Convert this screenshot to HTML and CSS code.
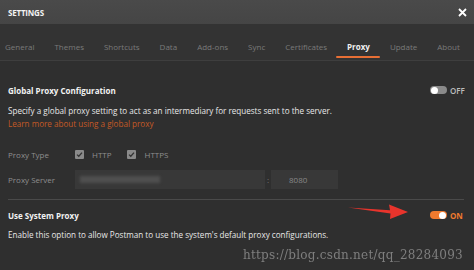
FILE: index.html
```html
<!DOCTYPE html>
<html>
<head>
<meta charset="utf-8">
<link rel="stylesheet" href="styles.css">
</head>
<body>
<div class="modal">
  <div class="header">
    <span class="title">SETTINGS</span>
    <svg class="close" width="9" height="9" viewBox="0 0 9 9"><path d="M1 1L8 8M8 1L1 8" stroke="#fff" stroke-width="1.8"/></svg>
  </div>
  <div class="tabs">
    <span class="tab">General</span>
    <span class="tab">Themes</span>
    <span class="tab">Shortcuts</span>
    <span class="tab">Data</span>
    <span class="tab">Add-ons</span>
    <span class="tab">Sync</span>
    <span class="tab">Certificates</span>
    <span class="tab active">Proxy</span>
    <span class="tab">Update</span>
    <span class="tab">About</span>
  </div>
  <div class="content">
    <div class="row-head first">
      <span class="heading">Global Proxy Configuration</span>
      <span class="switch"><span class="track off"><span class="knob"></span></span><span class="state off">OFF</span></span>
    </div>
    <p class="desc">Specify a global proxy setting to act as an intermediary for requests sent to the server.</p>
    <p class="link">Learn more about using a global proxy</p>
    <div class="field type">
      <span class="label">Proxy Type</span>
      <span class="check"><span class="box"><svg width="9" height="9" viewBox="0 0 9 9"><path d="M2 4.6L3.8 6.3L7 2.6" fill="none" stroke="#333" stroke-width="1.3"/></svg></span>HTTP</span>
      <span class="check"><span class="box"><svg width="9" height="9" viewBox="0 0 9 9"><path d="M2 4.6L3.8 6.3L7 2.6" fill="none" stroke="#333" stroke-width="1.3"/></svg></span>HTTPS</span>
    </div>
    <div class="field server">
      <span class="label">Proxy Server</span>
      <span class="input host"><span class="blur"></span></span>
      <span class="colon">:</span>
      <span class="input port">8080</span>
    </div>
    <div class="divider"></div>
    <div class="row-head second">
      <span class="heading">Use System Proxy</span>
      <span class="switch"><span class="track on"><span class="knob"></span></span><span class="state on">ON</span></span>
    </div>
    <p class="desc sys">Enable this option to allow Postman to use the system's default proxy configurations.</p>
    <div class="watermark">https://blog.csdn.net/qq_28284093</div>
  </div>
  <svg class="arrow" width="70" height="22" viewBox="0 0 70 22"><path d="M2 6.5L44 9.2L43 3.5L62 11L44 18L44.5 12.5Z" fill="#e8342c"/></svg>
</div>
</body>
</html>
```
FILE: styles.css
```css
* { box-sizing: border-box; }
html, body { margin: 0; padding: 0; }
body {
  width: 474px;
  height: 270px;
  overflow: hidden;
  background: #2e2e2e;
  font-family: "Open Sans", "Liberation Sans", sans-serif;
  font-size: 8px;
  color: #e6e6e6;
}
.modal { position: relative; width: 474px; height: 270px; background: #2f2f2f; }
.header {
  height: 24px;
  background: linear-gradient(#4a4a4a, #454545);
  display: flex;
  align-items: center;
  justify-content: space-between;
  padding: 0 7px 0 8px;
}
.title { font-weight: 700; font-size: 8px; color: #f2f2f2; letter-spacing: -0.2px; }
.close { display: block; }
.tabs {
  height: 37px;
  background: #333;
  border-bottom: 1px solid #3e3e3e;
  display: flex;
  align-items: stretch;
  padding-left: 5px;
  gap: 20px;
}
.tab {
  display: flex;
  align-items: center;
  padding-top: 9px;
  color: #7a7a7a;
  font-size: 8px;
  position: relative;
}
.tab.active { color: #f0f0f0; font-weight: 700; }
.tab.active::after {
  content: "";
  position: absolute;
  left: -11px;
  right: -10px;
  bottom: 2px;
  height: 2px;
  background: #e86f35;
  border-radius: 1px;
}
.content { padding: 0 10px 0 8px; }
.row-head {
  display: flex;
  align-items: center;
  justify-content: space-between;
  height: 14px;
}
.row-head.first { margin-top: 22px; }
.row-head.second { margin-top: 8px; }
.heading { font-weight: 700; color: #f2f2f2; font-size: 8px; }
.switch { display: flex; align-items: center; gap: 3px; }
.track {
  width: 17px; height: 8px; border-radius: 4px;
  display: flex; align-items: center; padding: 0 1px;
}
.track.off { background: #8a8a8a; justify-content: flex-start; }
.track.on { background: #f07a2e; justify-content: flex-end; }
.knob { width: 7px; height: 7px; border-radius: 50%; background: #fff; }
.state { font-weight: 700; font-size: 8px; width: 14px; }
.state.off { color: #bdbdbd; font-weight: 600; }
.state.on { color: #f07a2e; }
p { margin: 0; }
.desc { margin-top: 8px; line-height: 12px; color: #e8e8e8; font-size: 8.1px; }
.desc.sys { margin-top: 7px; }
.link { line-height: 12px; margin-top: 1px; color: #c45a26; font-size: 8.1px; }
.field { display: flex; align-items: center; }
.label { width: 67px; color: #8e8e8e; }
.type { margin-top: 18px; height: 12px; }
.check { display: flex; align-items: center; color: #8e8e8e; margin-right: 15px; }
.check .box {
  width: 9px; height: 9px; background: #8a8a8a; border-radius: 1px;
  margin-right: 8px; display: flex;
}
.check + .check .box { margin-right: 9px; }
.server { margin-top: 10px; height: 19px; }
.input { height: 19px; background: #383838; display: flex; align-items: center; }
.host { width: 190px; padding-left: 5px; }
.blur {
  width: 80px; height: 7px; background: #4f4f4f;
  filter: blur(1.5px);
}
.colon { width: 6px; text-align: center; color: #777; }
.port { width: 67px; padding-left: 18px; color: #888; }
.divider { margin-top: 10px; height: 1px; background: #4a4a4a; width: 456px; }
.watermark {
  font-family: "DejaVu Serif", "Liberation Serif", serif;
  font-size: 12px;
  color: #8c8c8c;
  text-align: right;
  margin-top: 7px;
  margin-right: 1px;
  letter-spacing: 0.25px;
  opacity: 0.85;
}
.arrow { position: absolute; left: 346px; top: 201px; }
```
